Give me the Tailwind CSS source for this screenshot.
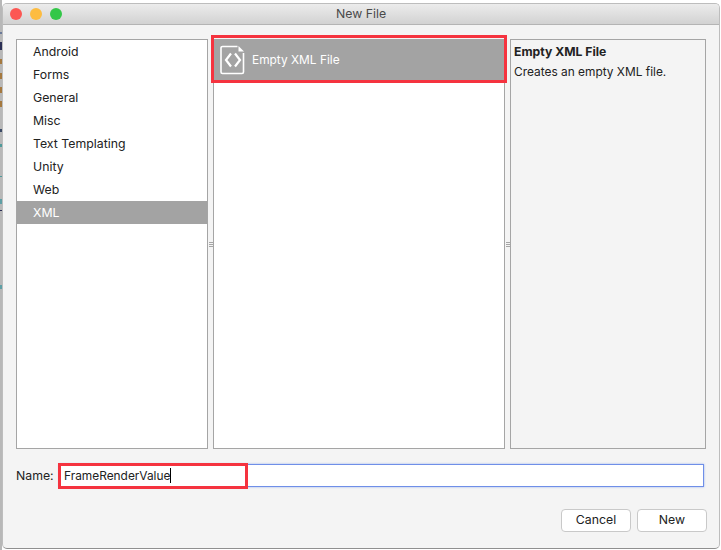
<!DOCTYPE html>
<html lang="en">
<head>
  <meta charset="UTF-8" />
  <title>New File</title>
  <script src="https://cdn.jsdelivr.net/npm/@tailwindcss/browser@4"></script>
</head>
<body class="relative w-[721px] h-[550px] overflow-hidden bg-white font-['Inter','Liberation_Sans',sans-serif] text-[12.3px] text-[#222]">
  <!-- what shows of the window behind, left edge -->
  <div class="absolute left-0 top-0 w-[2px] h-[550px] bg-[#b8b8b8]">
    <i class="absolute left-0 top-[32px] w-[2px] h-[2px] bg-[#6b7a99]"></i>
    <i class="absolute left-0 top-[42px] w-[2px] h-[8px] bg-[#2b2f55]"></i>
    <i class="absolute left-0 top-[59px] w-[2px] h-[5px] bg-[#a5793f]"></i>
    <i class="absolute left-0 top-[73px] w-[2px] h-[6px] bg-[#a5793f]"></i>
    <i class="absolute left-0 top-[87px] w-[2px] h-[6px] bg-[#a5793f]"></i>
    <i class="absolute left-0 top-[101px] w-[2px] h-[6px] bg-[#a5793f]"></i>
    <i class="absolute left-0 top-[129px] w-[2px] h-[3px] bg-[#3b4a66]"></i>
    <i class="absolute left-0 top-[144px] w-[2px] h-[3px] bg-[#4f9a9a]"></i>
    <i class="absolute left-0 top-[176px] w-[2px] h-[1px] bg-[#4f9a9a]"></i>
    <i class="absolute left-0 top-[199px] w-[2px] h-[5px] bg-[#5f9fa5]"></i>
    <i class="absolute left-0 top-[210px] w-[2px] h-[1px] bg-[#2b2f55]"></i>
    <i class="absolute left-0 top-[285px] w-[2px] h-[4px] bg-[#5f9fa5]"></i>
  </div>

  <div class="w-[721px] h-[550px] pl-[2px] pt-[3px] pr-[1px] pb-[1px]">
    <div class="w-full h-full flex flex-col rounded-[5px] bg-[#f4f4f4] border border-[#bdbdbd] border-b-[#8f8f8f] overflow-hidden">
      <!-- title bar -->
      <div class="relative h-[21px] shrink-0 pt-[1px] flex items-center justify-center bg-gradient-to-b from-[#ececec] to-[#d2d2d2] border-b border-[#b4b4b4] text-[#4a4a4a]">
        <div class="absolute left-[7px] top-[4px] flex gap-[8px]">
          <span class="w-[12px] h-[12px] rounded-full bg-[#fc5753]"></span>
          <span class="w-[12px] h-[12px] rounded-full bg-[#fdbc40]"></span>
          <span class="w-[12px] h-[12px] rounded-full bg-[#33c748]"></span>
        </div>
        New File
      </div>

      <div class="flex-1 flex flex-col pl-[13px] pr-[13px] pt-[14px] pb-[16px]">
        <!-- panes -->
        <div class="h-[410px] flex">
          <ul class="w-[192px] shrink-0 bg-white border border-[#a5a5a5]">
            <li class="h-[23px] pl-[16px] pt-[2px] flex items-center">Android</li>
            <li class="h-[23px] pl-[16px] pt-[2px] flex items-center">Forms</li>
            <li class="h-[23px] pl-[16px] pt-[2px] flex items-center">General</li>
            <li class="h-[23px] pl-[16px] pt-[2px] flex items-center">Misc</li>
            <li class="h-[23px] pl-[16px] pt-[2px] flex items-center">Text Templating</li>
            <li class="h-[23px] pl-[16px] pt-[2px] flex items-center">Unity</li>
            <li class="h-[23px] pl-[16px] pt-[2px] flex items-center">Web</li>
            <li class="h-[23px] pl-[16px] pt-[2px] flex items-center bg-[#a3a3a3] text-white">XML</li>
          </ul>
          <div class="w-[5px] shrink-0 flex flex-col items-center justify-center gap-[1px]">
            <i class="block w-[4px] h-[1px] bg-[#a5a5a5]"></i>
            <i class="block w-[4px] h-[1px] bg-[#a5a5a5]"></i>
            <i class="block w-[4px] h-[1px] bg-[#a5a5a5]"></i>
          </div>
          <div class="relative w-[292px] shrink-0 bg-white border border-[#a5a5a5]">
            <div class="h-[40px] flex items-center gap-[6px] pl-[6px] bg-[#a3a3a3] text-white text-[11.9px]">
              <svg width="26" height="30" viewBox="0 0 26 30" fill="none" stroke="#fff" stroke-width="1.6">
                <path d="M17.5 1.5H2.5A1.5 1.5 0 0 0 1 3V27A1.5 1.5 0 0 0 2.5 28.5H22A1.5 1.5 0 0 0 23.5 27V8" />
                <path d="M18.5 1L24 6.5H18.5Z" fill="#fff" stroke="none" />
                <path d="M11 8.5L6 15L11 21.5M15 8.5L20 15L15 21.5" stroke-width="2.2" />
              </svg>
              <span>Empty XML File</span>
            </div>
            <div class="absolute -left-[3px] -top-[5px] w-[296px] h-[48px] border-[3px] border-[#f5333f]"></div>
          </div>
          <div class="w-[5px] shrink-0 flex flex-col items-center justify-center gap-[1px]">
            <i class="block w-[4px] h-[1px] bg-[#a5a5a5]"></i>
            <i class="block w-[4px] h-[1px] bg-[#a5a5a5]"></i>
            <i class="block w-[4px] h-[1px] bg-[#a5a5a5]"></i>
          </div>
          <div class="flex-1 px-[3px] pt-[2px] border border-[#a5a5a5] leading-[20px]">
            <div class="font-bold text-[12.2px]">Empty XML File</div>
            <div class="text-[11.9px]">Creates an empty XML file.</div>
          </div>
        </div>

        <!-- name row -->
        <div class="relative mt-[15px] h-[23px] flex items-center">
          <label class="w-[43px] shrink-0 pt-[2px]">Name:</label>
          <div class="flex-1 mr-[2px] h-[23px] pl-[4px] flex items-center text-[11.9px] bg-white border border-[#6f8fe8] shadow-[0_0_2px_#9db4f0]">
            <span>FrameRenderValue</span><span class="w-[1px] h-[15px] bg-black"></span>
          </div>
          <div class="absolute left-[42px] -top-[1px] w-[190px] h-[26px] border-[3px] border-[#f5333f]"></div>
        </div>

        <!-- buttons -->
        <div class="mt-auto -mr-[1px] flex justify-end gap-[6px]">
          <button class="w-[70px] h-[23px] bg-white border border-[#c9c9c9] rounded-[4px]">Cancel</button>
          <button class="w-[70px] h-[23px] bg-white border border-[#c9c9c9] rounded-[4px]">New</button>
        </div>
      </div>
    </div>
  </div>
</body>
</html>
